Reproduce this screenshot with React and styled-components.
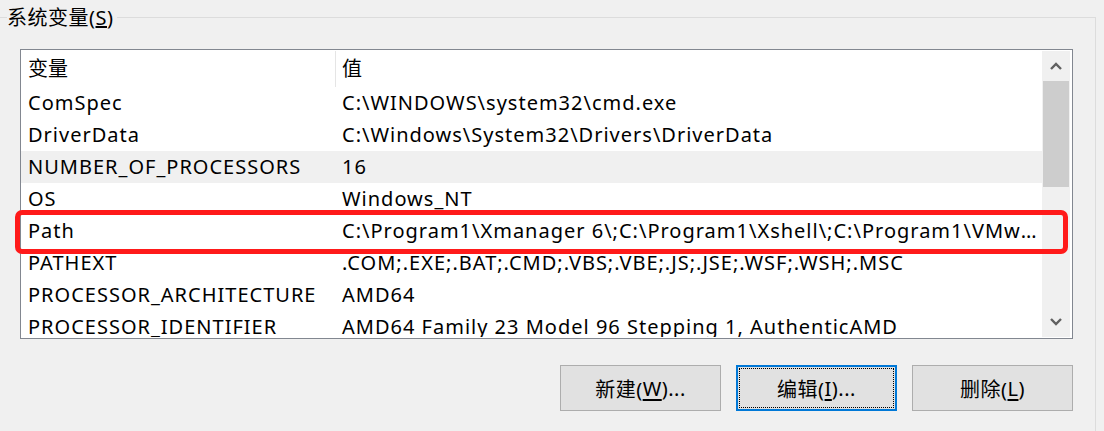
import styled, { createGlobalStyle } from "styled-components";

const GlobalStyle = createGlobalStyle`
  html, body {
    margin: 0;
    padding: 0;
    background: #f0f0f0;
  }
  body {
    font-family: "Noto Sans", "Noto Sans CJK SC", sans-serif;
    font-size: 20px;
    color: #000;
  }
`;

const variables = [
  { name: "ComSpec", value: "C:\\WINDOWS\\system32\\cmd.exe" },
  { name: "DriverData", value: "C:\\Windows\\System32\\Drivers\\DriverData" },
  { name: "NUMBER_OF_PROCESSORS", value: "16", hover: true },
  { name: "OS", value: "Windows_NT" },
  {
    name: "Path",
    value:
      "C:\\Program1\\Xmanager 6\\;C:\\Program1\\Xshell\\;C:\\Program1\\VMware\\VMware Workstation\\bin\\;C:\\WINDOWS\\system32",
  },
  { name: "PATHEXT", value: ".COM;.EXE;.BAT;.CMD;.VBS;.VBE;.JS;.JSE;.WSF;.WSH;.MSC" },
  { name: "PROCESSOR_ARCHITECTURE", value: "AMD64" },
  { name: "PROCESSOR_IDENTIFIER", value: "AMD64 Family 23 Model 96 Stepping 1, AuthenticAMD" },
];

export default function App() {
  return (
    <>
      <GlobalStyle />
      <Page>
        <GroupBox>
          <Legend>
            系统变量(<u>S</u>)
          </Legend>
          <ListView>
            <ListBody>
              <HeaderRow>
                <HeaderCell>变量</HeaderCell>
                <HeaderCell $value>值</HeaderCell>
              </HeaderRow>
              {variables.map((v) => (
                <Row key={v.name} $hover={v.hover}>
                  <NameCell>{v.name}</NameCell>
                  <ValueCell>{v.value}</ValueCell>
                </Row>
              ))}
            </ListBody>
            <ScrollBar>
              <ArrowButton>
                <svg width="12" height="8" viewBox="0 0 12 8">
                  <polyline points="1,7 6,2 11,7" fill="none" stroke="#606060" strokeWidth="2.4" />
                </svg>
              </ArrowButton>
              <Track>
                <Thumb />
              </Track>
              <ArrowButton>
                <svg width="12" height="8" viewBox="0 0 12 8">
                  <polyline points="1,1 6,6 11,1" fill="none" stroke="#606060" strokeWidth="2.4" />
                </svg>
              </ArrowButton>
            </ScrollBar>
            <Highlight />
          </ListView>
          <ButtonRow>
            <Button>
              新建(<u>W</u>)...
            </Button>
            <Button $focused>
              <FocusRing>
                编辑(<u>I</u>)...
              </FocusRing>
            </Button>
            <Button>
              删除(<u>L</u>)
            </Button>
          </ButtonRow>
        </GroupBox>
      </Page>
    </>
  );
}

const Page = styled.div`
  width: 1104px;
  height: 431px;
  overflow: hidden;
  padding-top: 17px;
  box-sizing: border-box;
`;

const GroupBox = styled.div`
  margin-right: 8px;
  height: 414px;
  border-top: 1px solid #dcdcdc;
  border-right: 1px solid #dcdcdc;
  padding: 0 22px 0 20px;
`;

const Legend = styled.div`
  width: fit-content;
  margin: -12px 0 0 -13px;
  padding: 0 4px 0 0;
  height: 24px;
  line-height: 24px;
  background: #f0f0f0;
  white-space: nowrap;
  letter-spacing: 0.5px;
`;

const ListView = styled.div`
  position: relative;
  margin-top: 19px;
  height: 290px;
  box-sizing: border-box;
  border: 1px solid #828790;
  background: #fff;
  display: flex;
  padding: 1px 1px 1px 0;
`;

const ListBody = styled.div`
  flex: 1;
  overflow: hidden;
`;

const HeaderRow = styled.div`
  display: grid;
  grid-template-columns: 314px 1fr;
  height: 36px;
  align-items: stretch;
`;

const HeaderCell = styled.div`
  display: flex;
  align-items: center;
  padding-left: ${(p) => (p.$value ? "6px" : "7px")};
  padding-bottom: 3px;
  border-left: ${(p) => (p.$value ? "1px solid #e5e5e5" : "none")};
`;

const Row = styled.div`
  display: grid;
  grid-template-columns: 315px 1fr;
  height: 32px;
  align-items: center;
  background: ${(p) => (p.$hover ? "#f0f0f0" : "#fff")};
  white-space: nowrap;
  letter-spacing: 1px;
  padding-bottom: 1px;
  box-sizing: border-box;
`;

const NameCell = styled.div`
  padding-left: 7px;
  overflow: hidden;
`;

const ValueCell = styled.div`
  padding-left: 6px;
  padding-right: 3px;
  overflow: hidden;
  text-overflow: ellipsis;
`;

const ScrollBar = styled.div`
  width: 28px;
  margin-right: 1px;
  background: #f0f0f0;
  display: flex;
  flex-direction: column;
`;

const ArrowButton = styled.div`
  height: 30px;
  display: flex;
  align-items: center;
  justify-content: center;
`;

const Track = styled.div`
  flex: 1;
`;

const Thumb = styled.div`
  height: 106px;
  margin: 0 1px;
  background: #cdcdcd;
`;

const Highlight = styled.div`
  position: absolute;
  left: -6px;
  top: 160px;
  width: 1053px;
  height: 44px;
  box-sizing: border-box;
  border: 5px solid #ff1a1a;
  border-radius: 7px;
  pointer-events: none;
`;

const ButtonRow = styled.div`
  display: flex;
  justify-content: flex-end;
  gap: 15px;
  margin-top: 26px;
`;

const Button = styled.div`
  width: 161px;
  height: 46px;
  box-sizing: border-box;
  display: flex;
  align-items: center;
  justify-content: center;
  background: #e1e1e1;
  border: ${(p) => (p.$focused ? "2px solid #0078d7" : "1px solid #adadad")};
  padding: ${(p) => (p.$focused ? "1px" : "0")};
  white-space: nowrap;
  letter-spacing: 0.5px;

  u {
    text-underline-offset: 3px;
  }
`;

const FocusRing = styled.div`
  flex: 1;
  align-self: stretch;
  display: flex;
  align-items: center;
  justify-content: center;
  border: 1px dotted #000;
`;
